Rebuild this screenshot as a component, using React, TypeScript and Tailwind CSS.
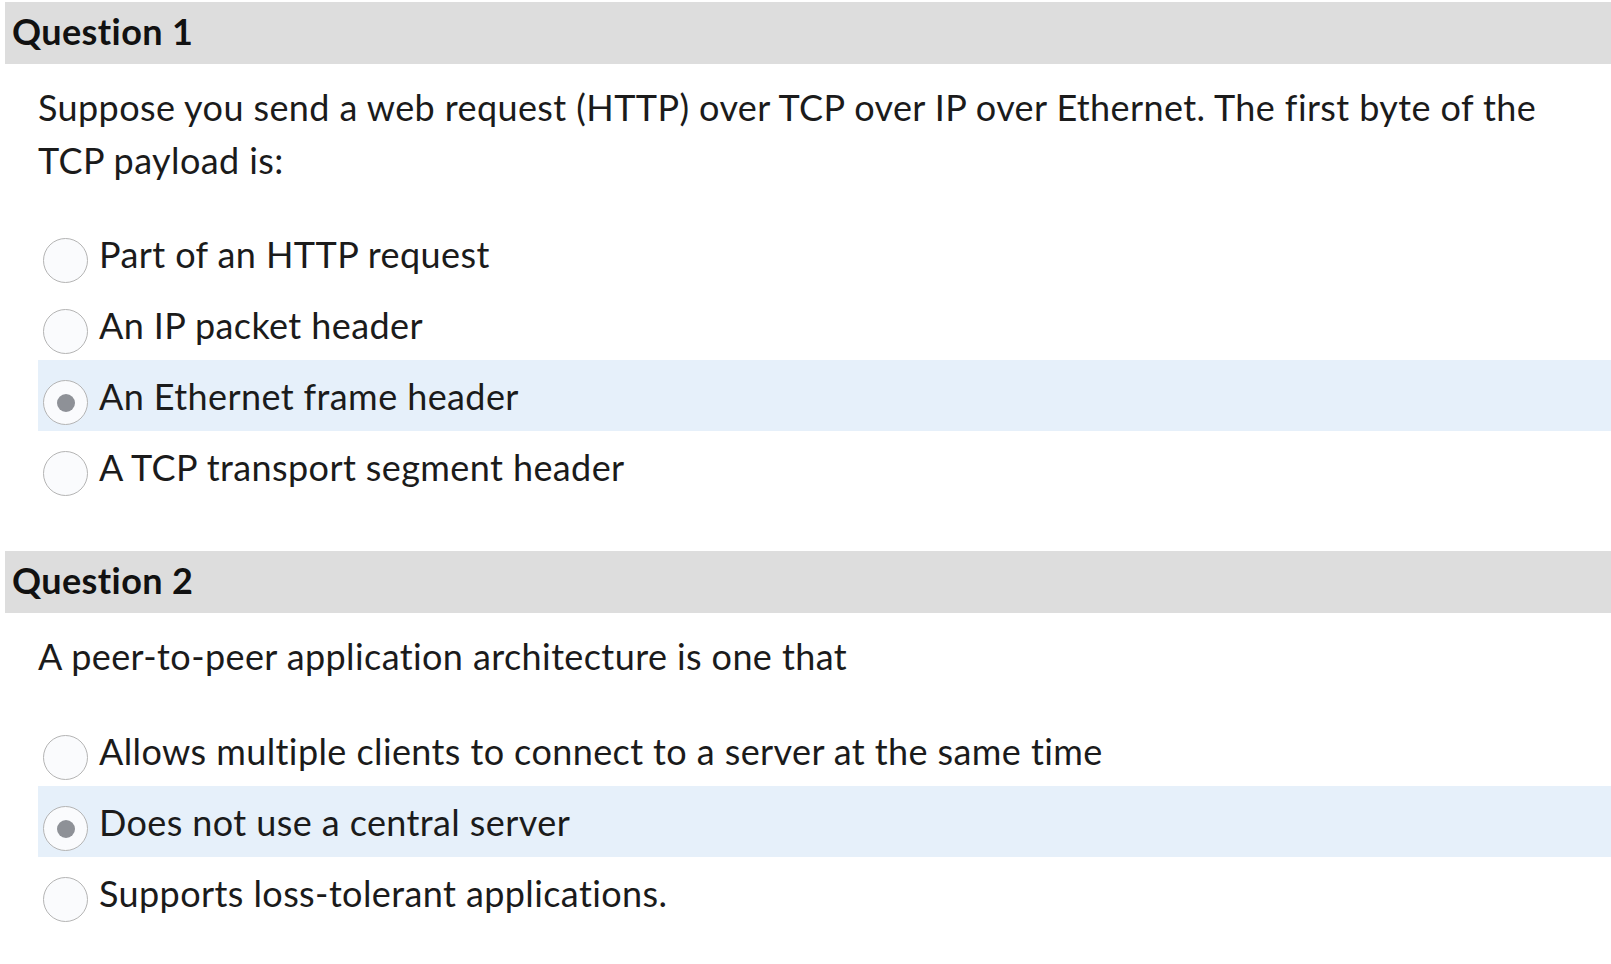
import React from 'react';

interface Option {
  label: string;
  selected?: boolean;
}

interface QuestionProps {
  number: number;
  prompt: React.ReactNode;
  options: Option[];
  wide?: boolean;
}

const Radio: React.FC<{ checked?: boolean }> = ({ checked }) => (
  <span className="relative top-[7px] ml-[5px] mr-[11px] flex h-[45px] w-[45px] shrink-0 items-center justify-center rounded-full border border-[#b4b4b4] bg-[#fafbfd]">
    {checked && <span className="h-[18px] w-[18px] rounded-full bg-[#8e9197]" />}
  </span>
);

const Question: React.FC<QuestionProps> = ({ number, prompt, options, wide }) => (
  <section>
    <div className="ml-[5px] flex h-[62px] items-center bg-[#dddddd] pb-[5px] pl-[7px] text-[36px] font-bold text-[#111111]">
      Question {number}
    </div>
    <div className="mt-[17px] pl-[38px] text-[36px] leading-[53px] text-[#1b1b1b]">{prompt}</div>
    <div className={`pl-[38px] ${wide ? 'mt-[32px]' : 'mt-[31px]'}`}>
      {options.map((opt) => (
        <div
          key={opt.label}
          className={`flex h-[71px] items-center text-[36px] text-[#1b1b1b] ${opt.selected ? 'bg-[#e6f0fa]' : ''}`}
        >
          <Radio checked={opt.selected} />
          <span>{opt.label}</span>
        </div>
      ))}
    </div>
  </section>
);

export default function App() {
  return (
    <div className="min-h-[964px] w-full bg-white pt-[2px] font-['Lato','Liberation_Sans',sans-serif] tracking-[0.4px] [font-variant-ligatures:none]">
      <Question
        number={1}
        prompt={
          <>
            Suppose you send a web request (HTTP) over TCP over IP over Ethernet. The first byte of the
            <br />
            TCP payload is:
          </>
        }
        options={[
          { label: 'Part of an HTTP request' },
          { label: 'An IP packet header' },
          { label: 'An Ethernet frame header', selected: true },
          { label: 'A TCP transport segment header' },
        ]}
      />
      <div className="h-[49px]" />
      <Question
        number={2}
        wide
        prompt="A peer-to-peer application architecture is one that"
        options={[
          { label: 'Allows multiple clients to connect to a server at the same time' },
          { label: 'Does not use a central server', selected: true },
          { label: 'Supports loss-tolerant applications.' },
        ]}
      />
    </div>
  );
}
